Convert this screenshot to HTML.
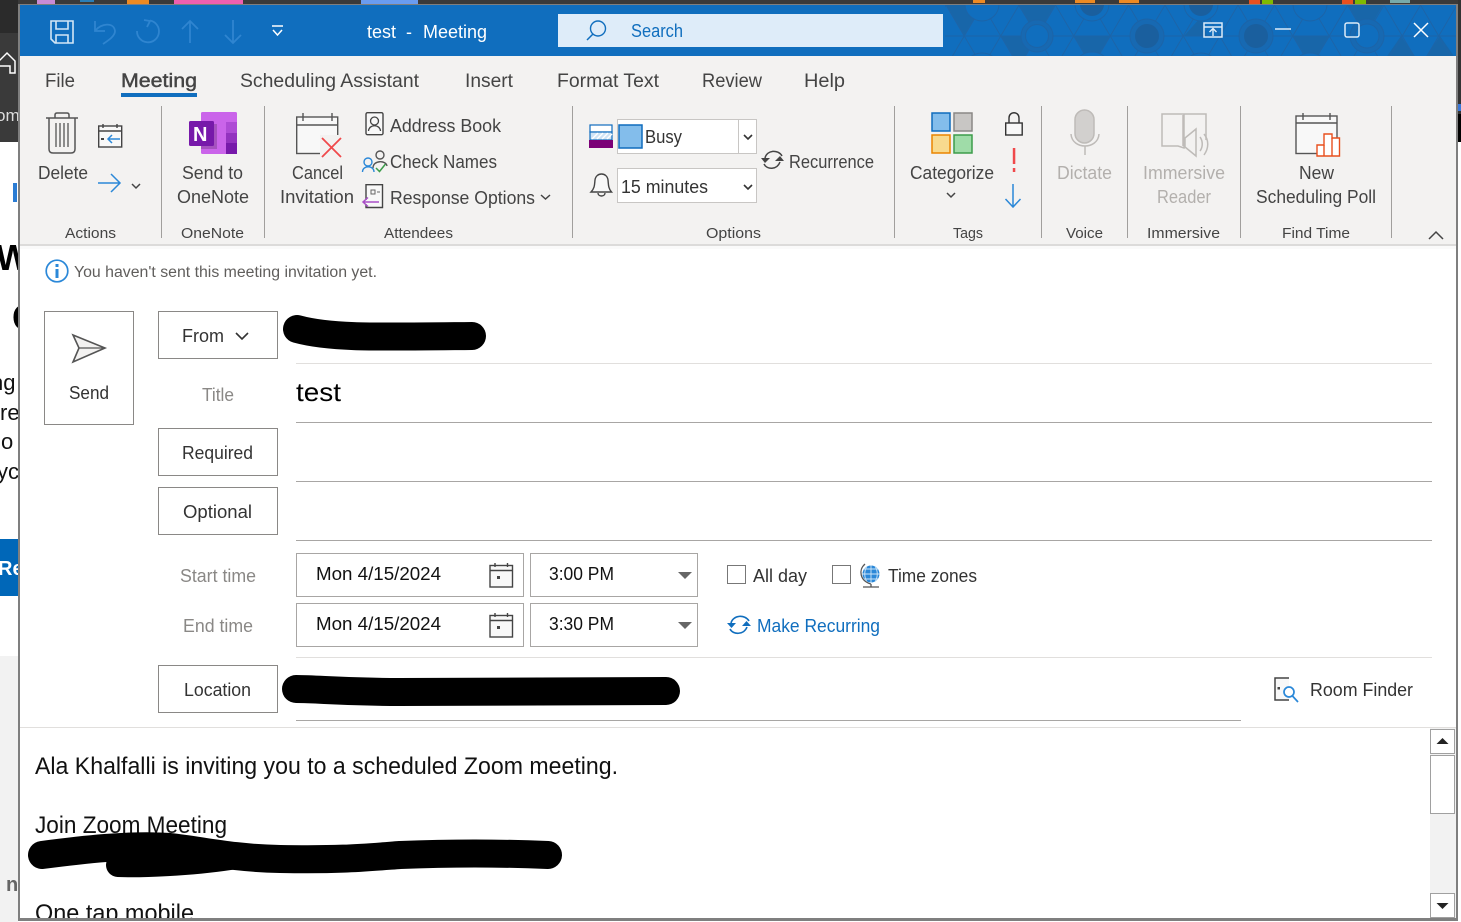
<!DOCTYPE html>
<html><head><meta charset="utf-8"><title>test - Meeting</title>
<style>
html,body{margin:0;padding:0;background:#fff;overflow:hidden}
svg{display:block}
text{font-family:"Liberation Sans",sans-serif;white-space:pre}
.r{font-size:18px;fill:#444}
.t{font-size:19.5px;fill:#444}
.g{font-size:15px;fill:#444}
.d{font-size:18px;fill:#b3b0ad}
.f{font-size:18px;fill:#333}
.l{font-size:18px;fill:#8a8886}
.k{font-size:18px;fill:#111}
.b{font-size:24px;fill:#111}
</style></head><body>
<svg width="1461" height="922" viewBox="0 0 1461 922" xmlns="http://www.w3.org/2000/svg">
<defs>
<pattern id="hex" patternUnits="userSpaceOnUse" width="36.5" height="62" patternTransform="translate(946,5)">
<path d="M0 0L18.25 31L36.5 0M18.25 31L0 62M18.25 31L36.5 62M0 31H36.5" fill="none" stroke="#1c64a8" stroke-width="1"/>
</pattern>
</defs>

<!-- background behind the window -->
<rect width="1461" height="922" fill="#fff"/>
<rect x="0" y="0" width="1461" height="5" fill="#3a3a3a"/>
<rect x="0" y="0" width="18" height="33" fill="#2b2b2b"/>
<rect x="0" y="33" width="18" height="109" fill="#3a3a3a"/>
<rect x="37" y="0" width="18" height="4" fill="#c98bd6"/><rect x="174" y="0" width="69" height="4" fill="#ef5fb0"/><rect x="127" y="0" width="22" height="4" fill="#ee8a22"/><rect x="361" y="0" width="57" height="4" fill="#6a9cf0"/><rect x="80" y="0" width="14" height="2" fill="#2a7fb8"/><rect x="973" y="0" width="12" height="3" fill="#ee8a22"/><rect x="1075" y="0" width="20" height="3" fill="#ee8a22"/><rect x="1119" y="0" width="20" height="3" fill="#ee8a22"/><rect x="1249" y="0" width="11" height="4" fill="#e8501e"/><rect x="1262" y="0" width="11" height="4" fill="#7fba00"/><rect x="1342" y="0" width="11" height="4" fill="#e8501e"/><rect x="1355" y="0" width="11" height="4" fill="#7fba00"/><rect x="1390" y="0" width="20" height="3" fill="#7aa"/>
<rect x="0" y="656" width="18" height="266" fill="#f2f2f2"/>
<path d="M-2 62L7 53L15 61V73H10V66H-2" fill="none" stroke="#fff" stroke-width="1.5"/>
<text x="-4" y="121" font-size="17" fill="#ddd">om</text>
<rect x="13" y="183" width="4" height="19" fill="#2b7cd3"/>
<text x="-4" y="270" font-size="36" font-weight="700" fill="#000">W</text>
<text x="12" y="330" font-size="36" font-weight="700" fill="#000">C</text>
<text x="-9" y="390" font-size="22" fill="#111">ng</text>
<text x="0" y="420" font-size="22" fill="#111">re</text>
<text x="1" y="449" font-size="22" fill="#111">o</text>
<text x="-3" y="479" font-size="22" fill="#111">yc</text>
<rect x="0" y="539" width="18" height="57" fill="#0067b8"/>
<text x="-2" y="575" font-size="20" font-weight="700" fill="#fff">Re</text>
<text x="6" y="891" font-size="20" font-weight="700" fill="#666">n</text>
<rect x="1458" y="0" width="3" height="142" fill="#333"/>
<rect x="1458" y="104" width="3" height="7" fill="#3b78d8"/>
<rect x="1458" y="114" width="3" height="28" fill="#000"/>

<!-- window -->
<rect x="18" y="4" width="1440" height="917" fill="#7f7f7f"/>
<rect x="20" y="5" width="1436" height="913" fill="#fff"/>

<!-- title bar -->
<rect x="20" y="5" width="1436" height="51" fill="#106ebe"/>
<svg x="945" y="5" width="511" height="51" viewBox="945 5 511 51">
<g fill="#1866a9">
<path d="M946 5H982L964 36Z"/><path d="M1018 5H1055L1037 36Z"/>
<path d="M1001 36H1037L1019 67Z"/><path d="M1074 36H1110L1092 67Z"/>
<path d="M1293 36H1330L1311 67Z"/><path d="M1348 5H1383L1365 36Z"/>
<path d="M1184 36L1201 17L1207 36Z"/>
<path d="M1383 62L1401 36L1419 62Z"/><path d="M1422 62L1440 36L1458 62Z"/>
</g>
<rect x="945" y="5" width="511" height="51" fill="url(#hex)"/>
<g stroke="#1c64a8" stroke-width="1">
<circle cx="982" cy="4" r="17" fill="#106ebe"/>
<circle cx="1092" cy="4" r="17" fill="#106ebe"/>
<circle cx="1201" cy="4" r="17" fill="#106ebe"/>
<circle cx="1310" cy="4" r="17" fill="#106ebe"/>
<circle cx="982" cy="71" r="18" fill="#106ebe"/>
<circle cx="1092" cy="71" r="19" fill="#106ebe"/>
<circle cx="1201" cy="71" r="18" fill="#106ebe"/>
<circle cx="1310" cy="71" r="18" fill="#106ebe"/>
<circle cx="1037" cy="36" r="16" fill="#1769b2"/>
<circle cx="1037" cy="36" r="11.500" fill="#106ebe"/>
<circle cx="1147" cy="36" r="17" fill="#1769b2"/>
<circle cx="1256" cy="36" r="17" fill="#1769b2"/>
<circle cx="1367" cy="36" r="17" fill="#1769b2"/>
<circle cx="1367" cy="36" r="12" fill="#106ebe"/>
</g>
<g fill="#1a5f9e">
<circle cx="1147" cy="36" r="12"/><circle cx="1256" cy="36" r="12"/><circle cx="1092" cy="4" r="12"/><circle cx="1201" cy="4" r="12"/>
</g>
</svg>

<g fill="none" stroke="#d3e6f6" stroke-width="1.6">
<path d="M51 21H73V43H55L51 39Z"/><path d="M56 21V29H68V21"/><path d="M56 43V35H68V43"/>
</g>
<g fill="none" stroke="#2f85d0" stroke-width="1.8">
<path d="M95 21V31H105"/><path d="M95 31C101 23 114 22 115 31C115 36 109 40 103 44"/>
<path d="M137 31A11 11 0 1 0 150 20.5"/><path d="M144 20L150 21L147 27"/>
<path d="M190 43V21M182 29L190 21L198 29"/>
<path d="M233 20V43M225 35L233 43L241 35"/>
</g>
<path d="M272 26H283" stroke="#fff" stroke-width="1.5"/><path d="M273 30L277.500 35L282 30" stroke="#fff" stroke-width="1.5" fill="none"/>
<text x="367" y="38" font-size="18" fill="#fff" textLength="29" lengthAdjust="spacingAndGlyphs">test</text>
<text x="406" y="38" font-size="18" fill="#fff">-</text>
<text x="423" y="38" font-size="18" fill="#fff" textLength="64" lengthAdjust="spacingAndGlyphs">Meeting</text>
<rect x="558" y="14" width="385" height="33" fill="#deecf9"/>
<circle cx="598" cy="28.500" r="7.500" fill="none" stroke="#106ebe" stroke-width="1.400"/><path d="M593 34L587 40" stroke="#106ebe" stroke-width="1.500"/>
<text x="631" y="37" font-size="18" fill="#106ebe" textLength="52" lengthAdjust="spacingAndGlyphs">Search</text>
<g fill="none" stroke="#dcebf8" stroke-width="1.500">
<path d="M1204 23H1222V37H1204ZM1204 27H1222"/><path d="M1213 36V29M1209.500 32L1213 28.500L1216.500 32" stroke-width="1.400"/>
<path d="M1275 29H1291"/>
<rect x="1345" y="23" width="14" height="14" rx="2"/>
<path d="M1414 23L1428 37M1428 23L1414 37" stroke="#fff"/>
</g>

<!-- ribbon -->
<rect x="20" y="56" width="1436" height="188" fill="#f3f2f1"/>
<rect x="20" y="244" width="1436" height="2" fill="#dcdbda"/>
<rect x="20" y="246" width="1436" height="3" fill="#fafafa"/>
<text class="t" x="45" y="87" textLength="30" lengthAdjust="spacingAndGlyphs">File</text>
<text class="t" x="121" y="87" textLength="76" lengthAdjust="spacingAndGlyphs" stroke="#444" stroke-width=".45">Meeting</text>
<rect x="121" y="93" width="76" height="4" fill="#106ebe"/>
<text class="t" x="240" y="87" textLength="179" lengthAdjust="spacingAndGlyphs">Scheduling Assistant</text>
<text class="t" x="465" y="87" textLength="48" lengthAdjust="spacingAndGlyphs">Insert</text>
<text class="t" x="557" y="87" textLength="102" lengthAdjust="spacingAndGlyphs">Format Text</text>
<text class="t" x="702" y="87" textLength="60" lengthAdjust="spacingAndGlyphs">Review</text>
<text class="t" x="804" y="87" textLength="41" lengthAdjust="spacingAndGlyphs">Help</text>

<g fill="#a19f9d">
<rect x="161" y="106" width="1" height="132"/><rect x="264" y="106" width="1" height="132"/><rect x="572" y="106" width="1" height="132"/><rect x="894" y="106" width="1" height="132"/><rect x="1041" y="106" width="1" height="132"/><rect x="1127" y="106" width="1" height="132"/><rect x="1240" y="106" width="1" height="132"/><rect x="1391" y="106" width="1" height="132"/>
</g>

<text class="g" x="65" y="238" textLength="51" lengthAdjust="spacingAndGlyphs">Actions</text>
<text class="g" x="181" y="238" textLength="63" lengthAdjust="spacingAndGlyphs">OneNote</text>
<text class="g" x="384" y="238" textLength="69" lengthAdjust="spacingAndGlyphs">Attendees</text>
<text class="g" x="706" y="238" textLength="55" lengthAdjust="spacingAndGlyphs">Options</text>
<text class="g" x="953" y="238" textLength="30" lengthAdjust="spacingAndGlyphs">Tags</text>
<text class="g" x="1066" y="238" textLength="37" lengthAdjust="spacingAndGlyphs">Voice</text>
<text class="g" x="1147" y="238" textLength="73" lengthAdjust="spacingAndGlyphs">Immersive</text>
<text class="g" x="1282" y="238" textLength="68" lengthAdjust="spacingAndGlyphs">Find Time</text>

<text class="r" x="38" y="179" textLength="50" lengthAdjust="spacingAndGlyphs">Delete</text>
<text class="r" x="182" y="179" textLength="61" lengthAdjust="spacingAndGlyphs">Send to</text>
<text class="r" x="177" y="203" textLength="72" lengthAdjust="spacingAndGlyphs">OneNote</text>
<text class="r" x="292" y="179" textLength="51" lengthAdjust="spacingAndGlyphs">Cancel</text>
<text class="r" x="280" y="203" textLength="74" lengthAdjust="spacingAndGlyphs">Invitation</text>
<text class="r" x="390" y="132" textLength="111" lengthAdjust="spacingAndGlyphs">Address Book</text>
<text class="r" x="390" y="168" textLength="107" lengthAdjust="spacingAndGlyphs">Check Names</text>
<text class="r" x="390" y="204" textLength="145" lengthAdjust="spacingAndGlyphs">Response Options</text>
<text class="r" x="789" y="168" textLength="85" lengthAdjust="spacingAndGlyphs">Recurrence</text>
<text class="r" x="910" y="179" textLength="84" lengthAdjust="spacingAndGlyphs">Categorize</text>
<text class="d" x="1057" y="179" textLength="55" lengthAdjust="spacingAndGlyphs">Dictate</text>
<text class="d" x="1143" y="179" textLength="82" lengthAdjust="spacingAndGlyphs">Immersive</text>
<text class="d" x="1157" y="203" textLength="54" lengthAdjust="spacingAndGlyphs">Reader</text>
<text class="r" x="1299" y="179" textLength="35" lengthAdjust="spacingAndGlyphs">New</text>
<text class="r" x="1256" y="203" textLength="120" lengthAdjust="spacingAndGlyphs">Scheduling Poll</text>

<!-- actions icons -->
<g fill="none" stroke="#555" stroke-width="1.500">
<path d="M46 118H78M55 118V115Q55 113 57 113H67Q69 113 69 115V118"/>
<path d="M49 118V149Q49 153 53 153H71Q75 153 75 149V118"/>
<path d="M56 123V147M60 123V147M64 123V147M68 123V147" stroke-width="1.300"/>
</g>
<rect x="98.700" y="126" width="23" height="21" fill="#f8f8f8" stroke="#444" stroke-width="1.400"/>
<path d="M99 131H121M103 124V128M117 124V128" stroke="#444" stroke-width="1.400"/>
<path d="M120 139H108M112 135L108 139L112 143" fill="none" stroke="#2b88d8" stroke-width="1.500"/><rect x="101" y="138" width="3" height="2" fill="#444"/>
<path d="M98 183H120M111 174L120 183L111 192" fill="none" stroke="#2b88d8" stroke-width="1.500"/>
<path d="M132 184L136 188L140 184" fill="none" stroke="#444" stroke-width="1.500"/>

<!-- onenote -->
<rect x="201" y="112" width="36" height="42" rx="1.500" fill="#ca64ea"/>
<rect x="226" y="122" width="11" height="11" fill="#ae4bd5"/>
<rect x="226" y="133" width="11" height="10" fill="#9332bf"/>
<rect x="226" y="143" width="11" height="11" fill="#7719aa"/>
<rect x="201" y="124" width="16" height="25" fill="#000" opacity=".18"/>
<rect x="189" y="121" width="25" height="25" rx="1.500" fill="#7719aa"/>
<text x="193" y="141" font-size="20" font-weight="700" fill="#fff">N</text>

<!-- cancel -->
<rect x="296.700" y="117" width="41" height="36.500" fill="#f8f8f8" stroke="#555" stroke-width="1.400"/>
<path d="M297 125H338M303 113V121M332 113V121" stroke="#555" stroke-width="1.400"/>
<rect x="320" y="135" width="22" height="23" fill="#f3f2f1"/>
<path d="M322 138L341 157M341 138L322 157" stroke="#f0494b" stroke-width="1.800"/>

<!-- address book etc -->
<rect x="366" y="112.700" width="17" height="22" rx="1.500" fill="#f8f8f8" stroke="#444" stroke-width="1.400"/>
<circle cx="374.500" cy="121" r="4" fill="none" stroke="#444" stroke-width="1.300"/>
<path d="M368.500 131C369 124 380 124 380.500 131" fill="none" stroke="#444" stroke-width="1.300"/>
<circle cx="380" cy="155" r="4" fill="none" stroke="#555" stroke-width="1.400"/>
<path d="M373 168C373 160 386 160 387 166" fill="none" stroke="#555" stroke-width="1.400"/>
<circle cx="368" cy="162" r="4" fill="#f3f2f1" stroke="#2b88d8" stroke-width="1.400"/>
<path d="M362.500 172C362.500 165 374 165 374 172" fill="#f3f2f1" stroke="#2b88d8" stroke-width="1.400"/>
<path d="M376 168L379.500 171.500L385.500 164" fill="none" stroke="#3c9c4b" stroke-width="1.500"/>
<path d="M366 200V184.700H382.500V207.500H366V204" fill="#f8f8f8" stroke="#444" stroke-width="1.400"/>
<rect x="371" y="190" width="4" height="4" fill="none" stroke="#666"/><path d="M377 192H380" stroke="#666"/>
<path d="M379 202H363M368 197.500L363 202L368 206.500" fill="none" stroke="#a94fc7" stroke-width="1.500"/>
<path d="M541 195L545.500 199L550 195" fill="none" stroke="#444" stroke-width="1.500"/>

<!-- options -->
<rect x="590" y="125" width="22" height="7" fill="#fff" stroke="#0f6cbd" stroke-width="1.200"/>
<rect x="590" y="132" width="22" height="8" fill="#cfe3f5" stroke="#0f6cbd" stroke-width="1.200"/>
<path d="M592 139L598 133M597 139L603 133M602 139L608 133M607 139L612 134" stroke="#fff" stroke-width="1.400"/>
<rect x="589" y="140" width="24" height="8" fill="#7b0077"/>
<rect x="617.500" y="119.500" width="139" height="34" fill="#fff" stroke="#c8c6c4"/>
<path d="M738.500 120V153" stroke="#c8c6c4"/>
<rect x="619" y="125" width="23" height="23" fill="#83bdeb" stroke="#0f6cbd" stroke-width="1.500"/>
<text class="f" x="645" y="143" textLength="37" lengthAdjust="spacingAndGlyphs">Busy</text>
<path d="M744 135L748 139L752 135" fill="none" stroke="#333" stroke-width="1.600"/>
<rect x="617.500" y="168.500" width="139" height="34" fill="#fff" stroke="#c8c6c4"/>
<text class="f" x="621" y="193" textLength="87" lengthAdjust="spacingAndGlyphs">15 minutes</text>
<path d="M744 185L748 189L752 185" fill="none" stroke="#333" stroke-width="1.600"/>
<path d="M591 192C595 188 594.500 184 595 180C596 172 607 172 608 180C608.500 184 608 188 611.500 192Z" fill="#f8f8f8" stroke="#444" stroke-width="1.400"/>
<path d="M598 193C598 197 605 197 605 193" fill="none" stroke="#444" stroke-width="1.400"/>
<path d="M765 158C767 150 778 149 782 156M780 162C777 170 767 170 764 164" fill="none" stroke="#444" stroke-width="1.500"/>
<path d="M761 158L770 158L765 163Z" fill="#444"/><path d="M784 161H775L780 156Z" fill="#444"/>

<!-- tags -->
<rect x="932" y="113" width="18" height="18" fill="#83bdeb" stroke="#0f6cbd" stroke-width="1.500"/>
<rect x="954" y="113" width="18" height="18" fill="#c8c6c4" stroke="#8a8886" stroke-width="1.500"/>
<rect x="932" y="135" width="18" height="18" fill="#f8da8e" stroke="#ea8500" stroke-width="1.500"/>
<rect x="954" y="135" width="18" height="18" fill="#9fdca8" stroke="#3c9c4b" stroke-width="1.500"/>
<path d="M947 193L951 197L955 193" fill="none" stroke="#444" stroke-width="1.500"/>
<rect x="1005.700" y="123" width="16.500" height="12" fill="#f8f8f8" stroke="#333" stroke-width="1.400"/>
<path d="M1009 123V118C1009 111 1019 111 1019 118V123" fill="none" stroke="#333" stroke-width="1.400"/>
<rect x="1012.800" y="148" width="2.500" height="16" fill="#f0494b"/><rect x="1012.800" y="168" width="2.500" height="4" fill="#f0494b"/>
<path d="M1013 184V207M1005.500 199L1013 207L1020.500 199" fill="none" stroke="#2b88d8" stroke-width="1.500"/>

<!-- mic -->
<rect x="1075" y="110" width="19" height="33" rx="9.500" fill="#d2d0ce" stroke="#bebbb8" stroke-width="1.500"/>
<path d="M1071 134C1072 150 1098 150 1099 134M1085 146V155" fill="none" stroke="#bebbb8" stroke-width="1.500"/>

<!-- immersive reader -->
<path d="M1162 114H1184V148L1178 146H1162ZM1184 118V114H1206V140" fill="#f3f2f1" stroke="#bebbb8" stroke-width="1.500"/>
<path d="M1183 115V146" stroke="#bebbb8" stroke-width="1.500"/>
<path d="M1185 146V138L1196 129V156L1185 147Z" fill="#f3f2f1" stroke="#bebbb8" stroke-width="1.500"/>
<path d="M1200 137C1203 141 1203 147 1200 151M1204 134C1209 140 1209 148 1204 155" fill="none" stroke="#bebbb8" stroke-width="1.500"/>

<!-- poll -->
<rect x="1296" y="116" width="41" height="37.500" fill="#f8f8f8" stroke="#555" stroke-width="1.400"/>
<path d="M1296 123H1337M1303 113V120M1330 113V120" stroke="#555" stroke-width="1.400"/>
<path d="M1317 156V145H1324V134H1332V138H1339.500V156Z" fill="#fff" stroke="#e8501e" stroke-width="1.400"/>
<path d="M1324 145V156M1332 138V156" stroke="#e8501e" stroke-width="1.400"/>
<path d="M1429 239L1436 232L1443 239" fill="none" stroke="#444" stroke-width="1.500"/>

<!-- info bar -->
<circle cx="57" cy="271" r="10.800" fill="none" stroke="#2b88d8" stroke-width="1.700"/>
<rect x="55.500" y="269" width="3" height="9" fill="#2b88d8"/><rect x="55.500" y="264" width="3" height="3" fill="#2b88d8"/>
<text x="74" y="277" font-size="15.500" fill="#605e5c" textLength="303" lengthAdjust="spacingAndGlyphs">You haven't sent this meeting invitation yet.</text>

<!-- send -->
<rect x="44.500" y="311.500" width="89" height="113" fill="#fff" stroke="#8a8886"/>
<path d="M73 335L105 348L73 362L79 348Z" fill="#f3f2f1" stroke="#555" stroke-width="1.600"/><path d="M79 348H105" stroke="#555" stroke-width="1.300"/>
<text class="f" x="69" y="399" textLength="40" lengthAdjust="spacingAndGlyphs">Send</text>

<!-- fields -->
<g fill="#fff" stroke="#8a8886">
<rect x="158.500" y="311.500" width="119" height="47"/>
<rect x="158.500" y="428.500" width="119" height="47"/>
<rect x="158.500" y="487.500" width="119" height="47"/>
<rect x="158.500" y="665.500" width="119" height="47"/>
</g>
<text class="f" x="182" y="342" textLength="42" lengthAdjust="spacingAndGlyphs">From</text>
<path d="M236 333L242 339L248 333" fill="none" stroke="#333" stroke-width="1.600"/>
<text class="f" x="182" y="459" textLength="71" lengthAdjust="spacingAndGlyphs">Required</text>
<text class="f" x="183" y="518" textLength="69" lengthAdjust="spacingAndGlyphs">Optional</text>
<text class="f" x="184" y="696" textLength="67" lengthAdjust="spacingAndGlyphs">Location</text>
<text class="l" x="202" y="401" textLength="32" lengthAdjust="spacingAndGlyphs">Title</text>
<text class="l" x="180" y="582" textLength="76" lengthAdjust="spacingAndGlyphs">Start time</text>
<text class="l" x="183" y="632" textLength="70" lengthAdjust="spacingAndGlyphs">End time</text>
<text x="296" y="401" font-size="26" fill="#000" textLength="45" lengthAdjust="spacingAndGlyphs">test</text>

<rect x="296" y="363" width="1136" height="1" fill="#e1dfdd"/>
<rect x="296" y="422" width="1136" height="1" fill="#a8a6a4"/>
<rect x="296" y="481" width="1136" height="1" fill="#a8a6a4"/>
<rect x="296" y="540" width="1136" height="1" fill="#a8a6a4"/>
<rect x="296" y="657" width="1136" height="1" fill="#e1dfdd"/>
<rect x="296" y="720" width="945" height="1" fill="#a8a6a4"/>
<rect x="20" y="727" width="1436" height="1" fill="#e1dfdd"/>

<!-- date/time -->
<g fill="#fff" stroke="#a8a6a4">
<rect x="296.500" y="553.500" width="227" height="43"/>
<rect x="530.500" y="553.500" width="167" height="43"/>
<rect x="296.500" y="603.500" width="227" height="43"/>
<rect x="530.500" y="603.500" width="167" height="43"/>
</g>
<text class="k" x="316" y="580" textLength="125" lengthAdjust="spacingAndGlyphs">Mon 4/15/2024</text>
<text class="k" x="316" y="630" textLength="125" lengthAdjust="spacingAndGlyphs">Mon 4/15/2024</text>
<text class="k" x="549" y="580" textLength="65" lengthAdjust="spacingAndGlyphs">3:00 PM</text>
<text class="k" x="549" y="630" textLength="65" lengthAdjust="spacingAndGlyphs">3:30 PM</text>
<g fill="none" stroke="#444" stroke-width="1.400">
<rect x="490" y="565.500" width="22.500" height="21.500" fill="#f8f8f8"/><path d="M490 570.500H512.500M495 563V567M507.500 563V567"/>
<rect x="490" y="615.500" width="22.500" height="21.500" fill="#f8f8f8"/><path d="M490 620.500H512.500M495 613V617M507.500 613V617"/>
</g>
<rect x="497" y="576" width="3" height="3" fill="#444"/><rect x="497" y="626" width="3" height="3" fill="#444"/>
<path d="M678 572H692L685 579Z" fill="#666"/><path d="M678 622H692L685 629Z" fill="#666"/>

<rect x="727.500" y="565.500" width="18" height="18" fill="#fff" stroke="#777"/>
<text class="f" x="753" y="582" textLength="54" lengthAdjust="spacingAndGlyphs">All day</text>
<rect x="832.500" y="565.500" width="18" height="18" fill="#fff" stroke="#777"/>
<circle cx="871" cy="574" r="8.500" fill="#2b88d8"/>
<path d="M862.500 574H879.500M864 569H878M864 579H878M871 565.500V582.500M867 566C864 571 864 577 867 582M875 566C878 571 878 577 875 582" fill="none" stroke="#cfe6f8" stroke-width=".9"/>
<path d="M865 564C858 570 860 581 871 584M871 584V587M863 587H879" fill="none" stroke="#555" stroke-width="1.300"/>
<text class="f" x="888" y="582" textLength="89" lengthAdjust="spacingAndGlyphs">Time zones</text>

<path d="M731 623C733 615 745 614 749 621M747 627C744 635 733 635 730 629" fill="none" stroke="#106ebe" stroke-width="1.600"/>
<path d="M727 623H736L731.500 628Z" fill="#106ebe"/><path d="M751 626H742L746.500 621Z" fill="#106ebe"/>
<text x="757" y="632" font-size="18" fill="#106ebe" textLength="123" lengthAdjust="spacingAndGlyphs">Make Recurring</text>

<path d="M1289 678H1275V700H1289" fill="#f8f8f8" stroke="#444" stroke-width="1.500"/><rect x="1277.500" y="687" width="2.500" height="2.500" fill="#444"/>
<circle cx="1289" cy="692" r="5" fill="#fff" stroke="#2b88d8" stroke-width="1.700"/><path d="M1292.500 696L1298 702" stroke="#2b88d8" stroke-width="1.700"/>
<text class="f" x="1310" y="696" textLength="103" lengthAdjust="spacingAndGlyphs">Room Finder</text>

<!-- body -->
<svg x="20" y="728" width="1410" height="190" viewBox="20 728 1410 190">
<text class="b" x="35" y="774" textLength="583" lengthAdjust="spacingAndGlyphs">Ala Khalfalli is inviting you to a scheduled Zoom meeting.</text>
<text class="b" x="35" y="833" textLength="192" lengthAdjust="spacingAndGlyphs">Join Zoom Meeting</text>
<text class="b" x="35" y="921" textLength="159" lengthAdjust="spacingAndGlyphs">One tap mobile</text>
</svg>

<!-- scrollbar -->
<rect x="1430" y="728" width="26" height="190" fill="#f2f2f2"/>
<g fill="#fff" stroke="#a0a0a0">
<rect x="1430.500" y="729.500" width="24" height="24"/>
<rect x="1430.500" y="755.500" width="24" height="58"/>
<rect x="1430.500" y="893.500" width="24" height="24"/>
</g>
<path d="M1436.500 744H1448.500L1442.500 738Z" fill="#222"/><path d="M1436.500 903H1448.500L1442.500 909Z" fill="#222"/>

<!-- redaction scribbles -->
<g fill="none" stroke="#000" stroke-linecap="round" stroke-linejoin="round">
<path d="M297 329C330 338 370 337 472 336" stroke-width="28"/>
<path d="M296 689C320 689 340 692 400 692L666 691" stroke-width="28"/>
<path d="M42 855C80 850 130 844 170 847C200 850 230 858 280 859C340 860 360 858 400 855C450 853 500 853 548 855" stroke-width="28"/>
<path d="M118 865C140 866 190 864 230 858" stroke-width="24"/>
</g>
</svg>
</body></html>
